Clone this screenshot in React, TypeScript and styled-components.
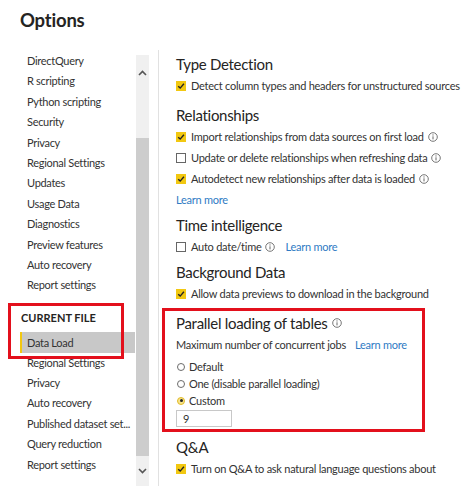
import React from "react";
import styled, { createGlobalStyle, css } from "styled-components";

const GlobalStyle = createGlobalStyle`
  html, body {
    margin: 0;
    padding: 0;
    background: #ffffff;
  }
  body {
    font-family: Lato, "Open Sans", sans-serif;
    color: #333333;
    overflow: hidden;
  }
`;

const palette = {
  text: "#333333",
  heading: "#252423",
  yellow: "#f2c811",
  link: "#2f7bc4",
  red: "#e3101c",
  divider: "#e1e1e1",
  track: "#f0f0f0",
  thumb: "#cdcdcd",
};

const Page = styled.div`
  width: 474px;
  height: 486px;
  display: flex;
  flex-direction: column;
  overflow: hidden;
`;

const Title = styled.h1`
  margin: 0;
  height: 50px;
  box-sizing: border-box;
  padding: 6px 0 0 20px;
  font-size: 18.5px;
  line-height: 28px;
  font-weight: 700;
  letter-spacing: -0.2px;
  color: ${palette.heading};
`;

const Body = styled.div`
  flex: 1;
  display: flex;
  min-height: 0;
`;

const Nav = styled.nav`
  width: 158px;
  flex-shrink: 0;
  box-sizing: border-box;
  padding-left: 20px;
  display: flex;
`;

const NavList = styled.ul`
  list-style: none;
  margin: 0;
  padding: 1px 0 0;
  width: 116px;
`;

const NavItem = styled.li<{ active?: boolean }>`
  height: 20.4px;
  line-height: 20.4px;
  padding-left: 7px;
  font-size: 11px;
  letter-spacing: -0.3px;
  white-space: nowrap;
  color: ${palette.text};
  ${({ active }) =>
    active &&
    css`
      height: 21px;
      line-height: 21px;
      margin-top: 2px;
      padding-left: 5px;
      border-left: 2px solid ${palette.yellow};
      background: #c8c8c8;
      width: 115px;
      box-sizing: border-box;
    `}
`;

const SectionGroup = styled.div`
  position: relative;
  margin-top: 10px;
`;

const SectionHeader = styled.li`
  height: 24px;
  line-height: 24px;
  padding-left: 1px;
  font-size: 11px;
  font-weight: 700;
  color: ${palette.heading};
`;

// red annotation drawn over the nav items
const Callout = styled.div`
  position: absolute;
  top: -3px;
  bottom: -6px;
  left: -12px;
  width: 116px;
  box-sizing: border-box;
  border: 3px solid ${palette.red};
  pointer-events: none;
`;

const Scrollbar = styled.div`
  width: 13px;
  margin-top: 5px;
  background: ${palette.track};
  display: flex;
  flex-direction: column;
`;

const ArrowButton = styled.div<{ size: number }>`
  height: ${({ size }) => size}px;
  display: flex;
  align-items: center;
  justify-content: center;
  color: #555555;
`;

const Track = styled.div`
  flex: 1;
  padding-top: 47px;
`;

const Thumb = styled.div`
  height: 318px;
  background: ${palette.thumb};
`;

const Content = styled.main`
  flex: 1;
  border-left: 1px solid ${palette.divider};
  padding: 3px 0 0 17px;
  min-width: 0;
`;

const Section = styled.section<{ spacing?: number }>`
  margin-top: ${({ spacing }) => spacing ?? 4}px;
`;

const Heading = styled.h2`
  margin: 0;
  height: 22px;
  line-height: 22px;
  font-size: 15px;
  letter-spacing: -0.3px;
  font-weight: 400;
  color: ${palette.heading};
  display: flex;
  align-items: center;
  gap: 1px;
  white-space: nowrap;
`;

const Row = styled.div<{ compact?: boolean }>`
  height: ${({ compact }) => (compact ? 17 : 21)}px;
  display: flex;
  align-items: center;
  font-size: 11px;
  letter-spacing: -0.25px;
  white-space: nowrap;
  color: ${palette.text};
`;

const Label = styled.span`
  margin-left: 5px;
`;

const Link = styled.a<{ offset?: number }>`
  color: ${palette.link};
  text-decoration: none;
  margin-left: ${({ offset }) => offset ?? 0}px;
`;

const Box = styled.span<{ checked?: boolean }>`
  width: 10px;
  height: 10px;
  box-sizing: border-box;
  flex-shrink: 0;
  display: flex;
  align-items: center;
  justify-content: center;
  ${({ checked }) =>
    checked
      ? css`
          background: ${palette.yellow};
        `
      : css`
          border: 1px solid #666666;
          background: #ffffff;
        `}
`;

const Radio = styled.span<{ selected?: boolean }>`
  width: 8px;
  height: 8px;
  margin-left: 1px;
  border-radius: 50%;
  box-sizing: border-box;
  flex-shrink: 0;
  display: flex;
  align-items: center;
  justify-content: center;
  border: 1px solid ${({ selected }) => (selected ? "#e2bb2a" : "#6b6b6b")};
  background: ${({ selected }) => (selected ? "#f7e48c" : "#ffffff")};
  &::after {
    content: "";
    width: 3px;
    height: 3px;
    border-radius: 50%;
    background: ${({ selected }) => (selected ? "#252423" : "transparent")};
  }
`;

const RadioLabel = styled.span`
  margin-left: 4px;
`;

const Highlight = styled.div`
  margin: 4px 0 0 -14px;
  width: 263px;
  box-sizing: border-box;
  border: 3px solid ${palette.red};
  padding: 1px 0 0 11px;
  height: 124px;
`;

const RadioGroup = styled.div`
  margin-top: 3px;
`;

const NumberInput = styled.input`
  display: block;
  margin-top: 1px;
  width: 56px;
  height: 17px;
  box-sizing: border-box;
  border: 1px solid #c8c8c8;
  padding: 0 6px;
  font-family: inherit;
  font-size: 11px;
  color: ${palette.text};
  outline: none;
`;

const InfoIcon = ({ size = 10 }: { size?: number }) => (
  <svg width={size} height={size} viewBox="0 0 10 10" style={{ marginLeft: 4, flexShrink: 0 }}>
    <circle cx="5" cy="5" r="4.3" fill="none" stroke="#666" strokeWidth="0.9" />
    <line x1="5" y1="4.3" x2="5" y2="7.4" stroke="#666" strokeWidth="1" />
    <circle cx="5" cy="2.9" r="0.6" fill="#666" />
  </svg>
);

const Check = () => (
  <svg width="8" height="8" viewBox="0 0 8 8">
    <path d="M1.2 4.2 L3.2 6.1 L6.9 1.8" fill="none" stroke="#252423" strokeWidth="1.4" />
  </svg>
);

const Checkbox = ({ checked }: { checked?: boolean }) => (
  <Box checked={checked}>{checked && <Check />}</Box>
);

const Chevron = ({ up }: { up?: boolean }) => (
  <svg width="9" height="6" viewBox="0 0 9 6">
    <path
      d={up ? "M1 5 L4.5 1.5 L8 5" : "M1 1 L4.5 4.5 L8 1"}
      fill="none"
      stroke="#555"
      strokeWidth="1.6"
    />
  </svg>
);

const globalItems = [
  "DirectQuery",
  "R scripting",
  "Python scripting",
  "Security",
  "Privacy",
  "Regional Settings",
  "Updates",
  "Usage Data",
  "Diagnostics",
  "Preview features",
  "Auto recovery",
  "Report settings",
];

const fileItems = [
  "Regional Settings",
  "Privacy",
  "Auto recovery",
  "Published dataset set...",
  "Query reduction",
  "Report settings",
];

const CheckRow = ({
  checked,
  label,
  info,
}: {
  checked?: boolean;
  label: string;
  info?: boolean;
}) => (
  <Row>
    <Checkbox checked={checked} />
    <Label>{label}</Label>
    {info && <InfoIcon />}
  </Row>
);

const App = () => {
  return (
    <>
      <GlobalStyle />
      <Page>
        <Title>Options</Title>
        <Body>
          <Nav>
            <NavList>
              {globalItems.map((item) => (
                <NavItem key={item}>{item}</NavItem>
              ))}
              <SectionGroup>
                <SectionHeader>CURRENT FILE</SectionHeader>
                <NavItem active>Data Load</NavItem>
                <Callout />
              </SectionGroup>
              {fileItems.map((item) => (
                <NavItem key={item}>{item}</NavItem>
              ))}
            </NavList>
            <Scrollbar>
              <ArrowButton size={36}>
                <Chevron up />
              </ArrowButton>
              <Track>
                <Thumb />
              </Track>
              <ArrowButton size={30}>
                <Chevron />
              </ArrowButton>
            </Scrollbar>
          </Nav>
          <Content>
            <Section spacing={0}>
              <Heading>Type Detection</Heading>
              <CheckRow checked label="Detect column types and headers for unstructured sources" />
            </Section>
            <Section spacing={8}>
              <Heading>Relationships</Heading>
              <CheckRow checked info label="Import relationships from data sources on first load" />
              <CheckRow info label="Update or delete relationships when refreshing data" />
              <CheckRow checked info label="Autodetect new relationships after data is loaded" />
              <Row>
                <Link href="#">Learn more</Link>
              </Row>
            </Section>
            <Section>
              <Heading>Time intelligence</Heading>
              <Row>
                <Checkbox />
                <Label>Auto date/time</Label>
                <InfoIcon />
                <Link href="#" offset={10}>
                  Learn more
                </Link>
              </Row>
            </Section>
            <Section>
              <Heading>Background Data</Heading>
              <CheckRow checked label="Allow data previews to download in the background" />
            </Section>
            <Highlight>
              <Heading>
                Parallel loading of tables
                <InfoIcon />
              </Heading>
              <Row>
                Maximum number of concurrent jobs
                <Link href="#" offset={9}>
                  Learn more
                </Link>
              </Row>
              <RadioGroup>
                <Row compact>
                  <Radio />
                  <RadioLabel>Default</RadioLabel>
                </Row>
                <Row compact>
                  <Radio />
                  <RadioLabel>One (disable parallel loading)</RadioLabel>
                </Row>
                <Row compact>
                  <Radio selected />
                  <RadioLabel>Custom</RadioLabel>
                </Row>
              </RadioGroup>
              <NumberInput defaultValue="9" />
            </Highlight>
            <Section>
              <Heading>Q&amp;A</Heading>
              <CheckRow checked label="Turn on Q&A to ask natural language questions about" />
            </Section>
          </Content>
        </Body>
      </Page>
    </>
  );
};

export default App;
